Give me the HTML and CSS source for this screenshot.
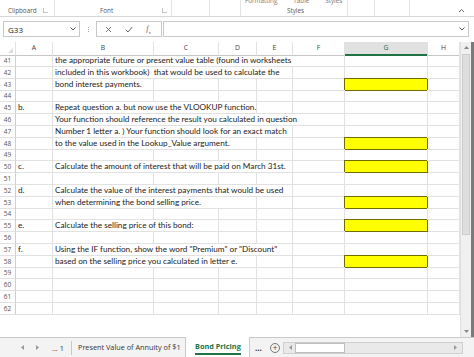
FILE: index.html
```html
<!DOCTYPE html>
<html>
<head>
  <title>Bond Pricing</title>
  <meta charset="UTF-8">
  <link rel="stylesheet" href="styles.css">
</head>
<body>
  <!-- ribbon group labels (cut off at the top) -->
  <div class="ribbon">
    <div class="grp g1"><span>Clipboard</span><i class="launch"></i></div>
    <div class="grp g2"><span>Font</span><i class="launch"></i></div>
    <div class="grp g3"></div>
    <div class="grp g4"></div>
    <div class="grp g5">
      <div class="cut">Formatting<em>Table</em><em>Styles</em></div>
      <span>Styles</span>
    </div>
    <div class="grp g6"></div>
    <div class="grp g7"></div>
    <div class="grp g8">
      <svg width="7" height="5" viewBox="0 0 7 5"><polyline points="1,4 3.5,1.5 6,4" fill="none" stroke="#666" stroke-width="1"/></svg>
    </div>
  </div>

  <!-- formula bar -->
  <div class="fbar">
    <div class="namebox">
      <span>G33</span>
      <svg width="6" height="4" viewBox="0 0 6 4"><polyline points="0.5,0.5 3,3 5.5,0.5" fill="none" stroke="#555" stroke-width="1"/></svg>
    </div>
    <div class="dots"><i></i><i></i><i></i></div>
    <div class="fxbox">
      <svg width="7" height="7" viewBox="0 0 7 7"><path d="M1 1 L6 6 M6 1 L1 6" stroke="#666" stroke-width="0.9"/></svg>
      <svg width="8" height="7" viewBox="0 0 8 7"><polyline points="0.8,3.8 3,6 7.2,1" fill="none" stroke="#666" stroke-width="1"/></svg>
      <span class="fx"><i>f</i><sub>x</sub></span>
    </div>
    <div class="finput">
      <svg width="6" height="4" viewBox="0 0 6 4"><polyline points="0.5,0.5 3,3 5.5,0.5" fill="none" stroke="#555" stroke-width="1"/></svg>
    </div>
  </div>

  <div class="sheet">
    <div class="grid">
      <div class="hdr">
        <b class="corner"></b><b>A</b><b>B</b><b>C</b><b>D</b><b>E</b><b>F</b><b class="sel">G</b><b>H</b>
      </div>

      <div class="row"><b>41</b><span></span><span class="t s5">the appropriate future or present value table (found in worksheets</span><span></span><span></span></div>
      <div class="row"><b>42</b><span></span><span class="t s4">included in this workbook)&nbsp; that would be used to calculate the</span><span></span><span></span><span></span></div>
      <div class="row"><b>43</b><span></span><span class="t">bond interest payments.</span><span></span><span></span><span></span><span></span><span class="y"></span><span></span></div>
      <div class="row"><b>44</b><span></span><span></span><span></span><span></span><span></span><span></span><span></span><span></span></div>
      <div class="row"><b>45</b><span class="t">b.</span><span class="t s3">Repeat question a. but now use the VLOOKUP function.</span><span></span><span></span><span></span><span></span></div>
      <div class="row"><b>46</b><span></span><span class="t s5">Your function should reference the result you calculated in question</span><span></span><span></span></div>
      <div class="row"><b>47</b><span></span><span class="t s4">Number 1 letter a. ) Your function should look for an exact match</span><span></span><span></span><span></span></div>
      <div class="row"><b>48</b><span></span><span class="t s3">to the value used in the Lookup_Value argument.</span><span></span><span></span><span class="y"></span><span></span></div>
      <div class="row"><b>49</b><span></span><span></span><span></span><span></span><span></span><span></span><span></span><span></span></div>
      <div class="row"><b>50</b><span class="t">c.</span><span class="t s4">Calculate the amount of interest that will be paid on March 31st.</span><span></span><span class="y"></span><span></span></div>
      <div class="row"><b>51</b><span></span><span></span><span></span><span></span><span></span><span></span><span></span><span></span></div>
      <div class="row"><b>52</b><span class="t">d.</span><span class="t s4">Calculate the value of the interest payments that would be used</span><span></span><span></span><span></span></div>
      <div class="row"><b>53</b><span></span><span class="t s3">when determining the bond selling price.</span><span></span><span></span><span class="y"></span><span></span></div>
      <div class="row"><b>54</b><span></span><span></span><span></span><span></span><span></span><span></span><span></span><span></span></div>
      <div class="row"><b>55</b><span class="t">e.</span><span class="t s2">Calculate the selling price of this bond:</span><span></span><span></span><span></span><span class="y"></span><span></span></div>
      <div class="row"><b>56</b><span></span><span></span><span></span><span></span><span></span><span></span><span></span><span></span></div>
      <div class="row"><b>57</b><span class="t">f.</span><span class="t s4">Using the IF function, show the word "Premium" or "Discount"</span><span></span><span></span><span></span></div>
      <div class="row"><b>58</b><span></span><span class="t s3">based on the selling price you calculated in letter e.</span><span></span><span></span><span class="y"></span><span></span></div>
      <div class="row"><b>59</b><span></span><span></span><span></span><span></span><span></span><span></span><span></span><span></span></div>
      <div class="row"><b>60</b><span></span><span></span><span></span><span></span><span></span><span></span><span></span><span></span></div>
      <div class="row"><b>61</b><span></span><span></span><span></span><span></span><span></span><span></span><span></span><span></span></div>
      <div class="row"><b>62</b><span></span><span></span><span></span><span></span><span></span><span></span><span></span><span></span></div>
    </div>

    <div class="vscroll">
      <div class="arrow">
        <svg width="5" height="3" viewBox="0 0 5 3"><polygon points="0,3 2.5,0 5,3" fill="#888"/></svg>
      </div>
      <div class="thumb"></div>
      <div class="track"></div>
      <div class="arrow">
        <svg width="5" height="3" viewBox="0 0 5 3"><polygon points="0,0 2.5,3 5,0" fill="#888"/></svg>
      </div>
    </div>
  </div>

  <!-- sheet tabs -->
  <div class="tabs">
    <div class="nav">
      <svg width="3" height="5" viewBox="0 0 3 5"><polygon points="3,0 0,2.5 3,5" fill="#999"/></svg>
      <svg width="3" height="5" viewBox="0 0 3 5"><polygon points="0,0 3,2.5 0,5" fill="#999"/></svg>
    </div>
    <div class="more1">... 1</div>
    <div class="tab">Present Value of Annuity of $1</div>
    <div class="tab active"><span>Bond Pricing</span></div>
    <div class="more2">...</div>
    <div class="add"><span>+</span></div>
    <div class="hscroll">
      <svg width="3" height="5" viewBox="0 0 3 5"><polygon points="3,0 0,2.5 3,5" fill="#999"/></svg>
      <div class="hthumb"></div>
      <svg class="right" width="3" height="5" viewBox="0 0 3 5"><polygon points="0,0 3,2.5 0,5" fill="#999"/></svg>
    </div>
  </div>
</body>
</html>
```

FILE: styles.css
```css
* {
  box-sizing: border-box;
}

body {
  margin: 0;
  width: 474px;
  height: 357px;
  overflow: hidden;
  background: #fff;
  font-family: 'Open Sans', 'Noto Sans', sans-serif;
  color: #444;
}

/* ribbon */
.ribbon {
  display: flex;
  height: 17px;
  border-bottom: 1px solid #d6d6d6;
}

.grp {
  position: relative;
  display: flex;
  align-items: center;
  padding-top: 5px;
  border-right: 1px solid #e4e4e4;
  font-size: 6.3px;
  color: #555;
  overflow: hidden;
}

.g1 { width: 55px; padding-left: 8px; }
.g2 { width: 117px; padding-left: 45px; }
.g3 { width: 38px; }
.g4 { width: 31px; }
.g5 { width: 107px; padding-left: 46px; }
.g6 { width: 27px; }
.g7 { width: 35px; }
.g8 { flex: 1; border-right: none; justify-content: flex-end; padding-right: 9px; }

.launch {
  margin-left: auto;
  margin-right: 6px;
  width: 5px;
  height: 5px;
  border-left: 1px solid #aaa;
  border-bottom: 1px solid #aaa;
  opacity: 0.7;
}

.g2 .launch {
  margin-right: 4px;
}

.cut {
  position: absolute;
  top: -3px;
  left: 4px;
  font-size: 6.3px;
  line-height: 7px;
  color: #777;
  white-space: nowrap;
}

.cut em {
  font-style: normal;
  margin-left: 16px;
}

/* formula bar */
.fbar {
  display: flex;
  height: 16px;
  margin-top: 4px;
  padding: 0 5px 0 3px;
}

.namebox {
  width: 77px;
  border: 1px solid #c9c9c9;
  display: flex;
  align-items: center;
  justify-content: space-between;
  padding: 0 3px 0 4px;
  font-size: 8px;
  color: #222;
}

.dots {
  width: 16px;
  display: flex;
  flex-direction: column;
  align-items: center;
  justify-content: center;
  gap: 1px;
}

.dots i {
  width: 1px;
  height: 1px;
  background: #aaa;
}

.fxbox {
  width: 66px;
  border: 1px solid #c9c9c9;
  display: flex;
  align-items: center;
  justify-content: space-between;
  padding: 0 10px 0 8px;
}

.fx {
  font-family: 'Liberation Serif', serif;
  font-size: 8px;
  color: #666;
}

.fx sub {
  font-size: 5px;
}

.finput {
  flex: 1;
  margin-left: 1px;
  border: 1px solid #c9c9c9;
  display: flex;
  align-items: center;
  justify-content: flex-end;
  padding-right: 3px;
}

/* sheet */
.sheet {
  display: flex;
  height: 295px;
  margin-top: 5px;
}

.grid {
  width: 460px;
}

.hdr,
.row {
  display: grid;
  grid-template-columns: 16px 37px 101px 65px 38px 36px 52px 83px 32px;
}

.hdr {
  height: 13px;
}

.hdr b {
  font-weight: normal;
  font-size: 6.8px;
  color: #444;
  text-align: center;
  line-height: 12px;
  border-right: 1px solid #e1e1e1;
  border-bottom: 1px solid #c6c6c6;
}

.hdr .corner {
  position: relative;
}

.hdr .corner::after {
  content: '';
  position: absolute;
  right: 2px;
  bottom: 2px;
  border-left: 5px solid transparent;
  border-bottom: 5px solid #dcdcdc;
}

.hdr .sel {
  background: #e1e1e1;
  color: #2f5f45;
  border-bottom: 2px solid #217346;
}

.row {
  height: 11.8px;
}

.row span,
.row b {
  border-right: 1px solid #e1e1e1;
  border-bottom: 1px solid #e1e1e1;
}

.row b {
  font-weight: normal;
  font-size: 6.5px;
  color: #555;
  text-align: center;
  line-height: 11px;
  border-right-color: #cfcfcf;
}

.t {
  font-family: Lato, 'Open Sans', sans-serif;
  font-size: 8.2px;
  line-height: 11px;
  color: #222;
  padding-left: 2px;
  white-space: nowrap;
}

.s2 { grid-column: span 2; }
.s3 { grid-column: span 3; }
.s4 { grid-column: span 4; }
.s5 { grid-column: span 5; }

.row .y {
  background: #ff0;
  border-color: #6f6d00;
  box-shadow: -1px -1px 0 #6f6d00;
}

/* vertical scrollbar */
.vscroll {
  flex: 1;
  display: flex;
  flex-direction: column;
  background: #f0f0f0;
  border-left: 1px solid #e0e0e0;
  border-right: 3px solid #7a7a7a;
}

.vscroll .arrow {
  height: 11px;
  display: flex;
  align-items: center;
  justify-content: center;
}

.thumb {
  height: 181px;
  margin: 1px 1px 0;
  background: #dedede;
  border: 1px solid #cdcdcd;
}

.track {
  flex: 1;
}

/* sheet tabs */
.tabs {
  display: flex;
  align-items: center;
  height: 20px;
  border-top: 1px solid #c9c9c9;
  background: #f3f3f3;
  font-size: 7.3px;
  color: #333;
}

.nav {
  width: 48px;
  display: flex;
  gap: 12px;
  padding-left: 21px;
}

.more1 {
  width: 24px;
  padding-left: 4px;
  border-right: 1px solid #c9c9c9;
  line-height: 14px;
}

.tab {
  width: 114px;
  height: 100%;
  padding-left: 6px;
  line-height: 19px;
  border-right: 1px solid #c9c9c9;
  white-space: nowrap;
}

.tab.active {
  width: 64px;
  padding-left: 9px;
  margin-top: -1px;
  height: 20px;
  background: #fff;
  color: #217346;
  font-weight: bold;
  line-height: 18px;
}

.tab.active span {
  display: inline-block;
  border-bottom: 2px solid #217346;
  line-height: 14px;
}

.more2 {
  width: 17px;
  padding-left: 5px;
  font-size: 8px;
  font-weight: bold;
  color: #333;
}

.add {
  width: 16px;
  display: flex;
  justify-content: center;
}

.add span {
  width: 10px;
  height: 10px;
  border: 1px solid #777;
  border-radius: 50%;
  font-size: 9px;
  line-height: 7px;
  text-align: center;
  color: #555;
}

.hscroll {
  width: 180px;
  height: 12px;
  display: flex;
  align-items: center;
  gap: 3px;
  padding: 0 5px 0 5px;
  background: #e9e9e9;
  border: 1px solid #cfcfcf;
}

.hthumb {
  width: 50px;
  height: 10px;
  background: #fff;
  border: 1px solid #bdbdbd;
}

.hscroll .right {
  margin-left: auto;
}
```
